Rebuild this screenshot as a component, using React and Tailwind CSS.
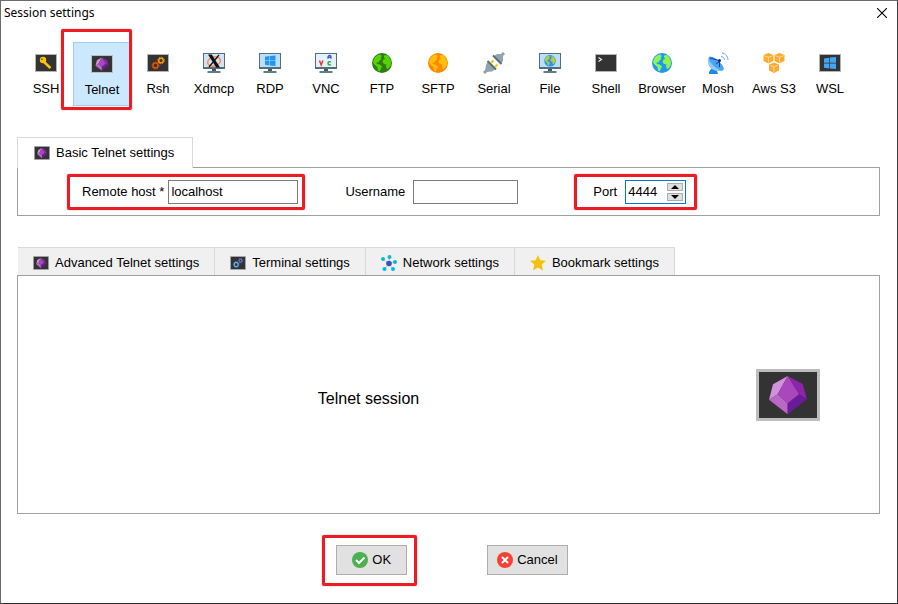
import React, { useState } from "react";

function Screen({ children, className = "h-[18px] w-[22px]" }) {
  return (
    <svg viewBox="0 0 22 18" preserveAspectRatio="none" className={className} aria-hidden="true">
      <rect x="0.5" y="0.5" width="21" height="17" fill="#333" stroke="#b4b4b4" />
      {children}
    </svg>
  );
}

function Monitor({ children, fill = "#bbdefb" }) {
  return (
    <svg viewBox="0 0 22 20" className="h-5 w-[22px]" aria-hidden="true">
      <rect x="0.5" y="0.5" width="21" height="15" fill={fill} stroke="#546e7a" />
      <path d="M0 14h22v2H0z" fill="#546e7a" />
      <path d="M9 16h4v2.500H9z" fill="#455a64" />
      <path d="M4.500 18h13v2h-13z" fill="#607d8b" />
      {children}
    </svg>
  );
}

function Gem({ className = "h-[18px] w-[22px]", border = 3 }) {
  return (
    <svg viewBox="0 0 64 52" preserveAspectRatio="none" className={className} aria-hidden="true">
      <rect width="64" height="52" fill="#bdbdbd" />
      <rect x={border} y={border} width={64 - border * 2} height={52 - border * 2} fill="#333" />
      <path d="M31.700 7L17 15.300 13 30.700 21.700 25.300z" fill="#ce93d8" />
      <path d="M31.700 7L46.700 15 51 30.300 43 25.300z" fill="#8e24aa" />
      <path d="M13 30.700L21.700 25.300 31.700 34.300V45.300z" fill="#ba68c8" />
      <path d="M51 30.300L43 25.300 31.700 34.300V45.300z" fill="#6a1b9a" />
      <path d="M31.700 7L21.700 25.300 31.700 34.300 43 25.300z" fill="#ab47bc" />
    </svg>
  );
}

function GlobeShape({ sea, land }) {
  return (
    <>
      <circle cx="10" cy="10" r="10" fill={sea} />
      <path
        d="M1.500 7C2.500 4 5 1.800 8 1.500L10 3 8.500 4.500 9.500 6 7.500 7.500 6.500 9.500 4.500 9.500 5 11 7.500 11.500 10 13.500 9 15.500 7.500 18.500 6 17.500 5.500 14 3 12 1.200 10z"
        fill={land}
      />
      <path
        d="M12 2.500L15 2C17.500 4 19 6.500 19 9.500L18.500 13 16.500 15.500 15 16 14 13.500 14.500 11.500 12 11 10.500 9 11.500 6.500 13.500 6 12 4.500z"
        fill={land}
      />
    </>
  );
}

function Globe({ sea, land }) {
  return (
    <svg viewBox="0 0 20 20" className="h-5 w-5" aria-hidden="true">
      <GlobeShape sea={sea} land={land} />
    </svg>
  );
}

function Gear({ x, y, r, color }) {
  return (
    <g fill="none" stroke={color}>
      <circle cx={x} cy={y} r={r} strokeWidth="1.500" />
      <circle cx={x} cy={y} r={r + 1} strokeWidth="1" strokeDasharray="1.300 1.300" />
    </g>
  );
}

function WindowsShape({ color }) {
  return (
    <g fill={color}>
      <path d="M0 1.300L4.700.6v4.700H0z" />
      <path d="M5.300.5L11 0v5.300H5.300z" />
      <path d="M0 5.900h4.700v4.600L0 9.800z" />
      <path d="M5.300 5.900H11V11l-5.700-.5z" />
    </g>
  );
}

function KeyIcon() {
  return (
    <Screen>
      <circle cx="8" cy="6" r="3.200" fill="#ffc107" />
      <circle cx="7" cy="5.200" r="0.800" fill="#333" />
      <path d="M9 8l6.500 6" stroke="#ffc107" strokeWidth="2.400" fill="none" />
      <path d="M11.500 12l1-1M13.500 13.800l1-1" stroke="#ffc107" strokeWidth="1.200" fill="none" />
    </Screen>
  );
}

function RshIcon() {
  return (
    <Screen>
      <Gear x={14} y={6.500} r={2.300} color="#ff9800" />
      <Gear x={8.500} y={11.500} r={2.500} color="#e65100" />
    </Screen>
  );
}

function XdmcpIcon() {
  return (
    <Monitor fill="#cfe4f7">
      <ellipse cx="11" cy="8.500" rx="6.500" ry="4.500" fill="none" stroke="#ff8a50" strokeWidth="1.500" transform="rotate(-15 11 8.500)" />
      <path d="M5 1.500h3.800L17 14.500h-3.800z" fill="#111" />
      <path d="M16 2L6 14" stroke="#111" strokeWidth="1.200" />
    </Monitor>
  );
}

function RdpIcon() {
  return (
    <Monitor>
      <g transform="translate(6 2.500) scale(.95)">
        <WindowsShape color="#2196f3" />
      </g>
    </Monitor>
  );
}

function VncIcon() {
  return (
    <Monitor fill="#e3f2fd">
      <path d="M4.500 7.500l1.700 4.500 1.700-4.500" fill="none" stroke="#e53935" strokeWidth="1.500" />
      <path d="M16 9.200c-1-.8-3-.6-3 1.100s2 2 3 1.200" fill="none" stroke="#2eaf3c" strokeWidth="1.500" />
      <path d="M13 5.700V4c0-2 3-2 3 0v1.700M13 4.300h3" fill="none" stroke="#3f51e0" strokeWidth="1.300" />
    </Monitor>
  );
}

function SerialIcon() {
  return (
    <svg viewBox="0 0 22 22" className="h-[22px] w-[22px]" aria-hidden="true">
      <path d="M1 21l4-4M17 5l4-4" stroke="#90a4ae" strokeWidth="3" />
      <path d="M4.500 10L12 17.500 9 19.500l-6 .5-1-1L3 13z" fill="#90a4ae" />
      <path d="M11 4l7.500 7.500 1.500-3V3l-1-1h-5z" fill="#90a4ae" />
      <path d="M4.500 9l8.500 8.500M10 3.500l8.500 8.500" stroke="#546e7a" strokeWidth="2" />
      <path d="M8 11l2.500-2.500M12 15l2.500-2.500" stroke="#ffc107" strokeWidth="2" />
    </svg>
  );
}

function FileIcon() {
  return (
    <Monitor>
      <g transform="translate(5.200 2) scale(.58)">
        <GlobeShape sea="#2196f3" land="#c0ca33" />
      </g>
    </Monitor>
  );
}

function ShellIcon() {
  return (
    <Screen>
      <path d="M3.500 3.500l3 2-3 2" fill="none" stroke="#eee" strokeWidth="1.200" />
    </Screen>
  );
}

function MoshIcon() {
  return (
    <svg viewBox="0 0 22 22" className="h-[22px] w-[22px]" aria-hidden="true">
      <path d="M4 17l5-1 2 6H2v-2z" fill="#1e88e5" />
      <path d="M2 5C0 9 1 14 4 16.500s9 3.500 12.500 1.500z" fill="#90caf9" />
      <ellipse cx="9.200" cy="11.500" rx="9.700" ry="3.500" fill="#42a5f5" transform="rotate(42 9.200 11.500)" />
      <path d="M9 12l4-3M12.500 9v6M3 6l9 2.500" stroke="#1a3f91" strokeWidth="1" />
      <circle cx="12.500" cy="8.500" r="1.500" fill="#1a237e" />
      <path d="M14 4.500c2 0 3.300 1.500 3.500 3.500M15 1c3.500.3 5.700 3 6 7" fill="none" stroke="#64a9ee" strokeWidth="1" />
    </svg>
  );
}

function Cube({ x, y }) {
  return (
    <g transform={`translate(${x} ${y})`}>
      <path d="M0 2l5-2 5 2v6l-5 2.500L0 8z" fill="#fbac30" />
      <path d="M1 2.700L5 4.300l4-1.600M5 4.300V9.500" fill="none" stroke="#ffe3b5" strokeWidth="0.800" />
    </g>
  );
}

function AwsIcon() {
  return (
    <svg viewBox="0 0 22 20" className="h-5 w-[22px]" aria-hidden="true">
      <Cube x={0.5} y={0} />
      <Cube x={11.5} y={0} />
      <Cube x={6} y={9.5} />
    </svg>
  );
}

function WslIcon() {
  return (
    <Screen>
      <g transform="translate(5 3) scale(1.090)">
        <WindowsShape color="#42a5f5" />
      </g>
    </Screen>
  );
}

function TerminalIcon() {
  return (
    <Screen className="h-[14px] w-4">
      <Gear x={14.500} y={6} r={1.900} color="#5c78d0" />
      <Gear x={8.500} y={11} r={2.700} color="#64b5f6" />
    </Screen>
  );
}

function NetworkIcon() {
  const nodes = [[2, 4], [8.500, 2], [14, 7], [12, 14], [3.500, 14]];
  return (
    <svg viewBox="0 0 16 16" className="h-4 w-4" aria-hidden="true">
      {nodes.map(([x, y]) => (
        <path key={x} d={`M8 8.500L${x} ${y}`} stroke="#b0bec5" strokeWidth="0.800" />
      ))}
      {nodes.map(([x, y]) => (
        <circle key={x} cx={x} cy={y} r="2" fill="#00bcd4" />
      ))}
      <circle cx="8" cy="8.500" r="2.800" fill="#3f51b5" />
    </svg>
  );
}

function StarIcon() {
  return (
    <svg viewBox="0 0 16 16" className="h-4 w-4" aria-hidden="true">
      <path d="M8 0l2.300 5.300 5.700.5-4.300 3.800L13 15.500 8 12.500l-5 3 1.300-5.900L0 5.800l5.700-.5z" fill="#f4c20d" />
    </svg>
  );
}

function RoundIcon({ color, d }) {
  return (
    <svg viewBox="0 0 16 16" className="h-4 w-4" aria-hidden="true">
      <circle cx="8" cy="8" r="8" fill={color} />
      <path d={d} fill="none" stroke="#fff" strokeWidth="2" />
    </svg>
  );
}

const sessions = [
  { name: "SSH", icon: <KeyIcon /> },
  { name: "Telnet", icon: <Gem />, marked: true },
  { name: "Rsh", icon: <RshIcon /> },
  { name: "Xdmcp", icon: <XdmcpIcon /> },
  { name: "RDP", icon: <RdpIcon /> },
  { name: "VNC", icon: <VncIcon /> },
  { name: "FTP", icon: <Globe sea="#2e7d14" land="#55d400" /> },
  { name: "SFTP", icon: <Globe sea="#ff8800" land="#ffc107" /> },
  { name: "Serial", icon: <SerialIcon /> },
  { name: "File", icon: <FileIcon /> },
  { name: "Shell", icon: <ShellIcon /> },
  { name: "Browser", icon: <Globe sea="#2196f3" land="#8cf552" /> },
  { name: "Mosh", icon: <MoshIcon /> },
  { name: "Aws S3", icon: <AwsIcon /> },
  { name: "WSL", icon: <WslIcon /> },
];

const tabs = [
  { name: "Advanced Telnet settings", icon: <Gem className="h-[14px] w-4" /> },
  { name: "Terminal settings", icon: <TerminalIcon /> },
  { name: "Network settings", icon: <NetworkIcon /> },
  { name: "Bookmark settings", icon: <StarIcon /> },
];

function Highlight({ className }) {
  return (
    <span
      className={`pointer-events-none absolute rounded-xs border-3 border-[#ed1c24] shadow-[0_0_1px_#ed1c24] ${className}`}
    />
  );
}

export default function App() {
  const [port, setPort] = useState(4444);
  return (
    <div className="flex min-h-screen flex-col border border-[#6b6b6b] border-r-[#3c3c40] border-b-[#2f2b30] bg-white font-['Liberation_Sans',Arial,sans-serif] text-[13px] leading-4 text-black">
      <header className="flex h-6 items-center justify-between pr-[9px] pl-[3px]">
        <h1 className="font-['Noto_Sans','Open_Sans',sans-serif] text-xs">Session settings</h1>
        <button type="button" aria-label="Close" className="p-px">
          <svg viewBox="0 0 10 10" className="h-[10px] w-[10px]" aria-hidden="true">
            <path d="M0 0l10 10M10 0L0 10" stroke="#000" strokeWidth="1.100" />
          </svg>
        </button>
      </header>

      <nav className="mt-[17px] flex pl-[17px]">
        {sessions.map((s) => (
          <button
            key={s.name}
            type="button"
            className={`relative flex h-16 shrink-0 flex-col items-center border whitespace-nowrap ${
              s.marked ? "-mx-px w-[58px] border-[#99d1ff] bg-[#cce8ff] pt-[10px]" : "w-14 border-transparent pt-[9px]"
            }`}
          >
            <span className="flex h-[22px] items-center">{s.icon}</span>
            <span className="mt-[7px]">{s.name}</span>
            {s.marked && <Highlight className="-top-[14px] -right-[2px] -bottom-[5px] -left-[13px]" />}
          </button>
        ))}
      </nav>

      <main className="flex flex-1 flex-col pt-[31px] pr-[17px] pl-4">
        <section>
          <div className="flex">
            <h2 className="relative z-10 -mb-px flex h-[31px] items-center gap-[6px] border border-b-0 border-[#d9d9d9] bg-white pr-[18px] pl-4">
              <Gem className="h-[14px] w-4" />
              Basic Telnet settings
            </h2>
          </div>
          <form className="flex h-[49px] items-center border border-[#a0a0a0] pl-[49px]">
            <div className="relative flex h-9 items-center gap-1 pr-[7px] pl-[15px]">
              <label htmlFor="host">Remote host *</label>
              <input id="host" defaultValue="localhost" className="h-6 w-[130px] border border-[#7a7a7a] px-[2px] outline-none" />
              <Highlight className="inset-0" />
            </div>
            <div className="ml-10 flex items-center gap-2">
              <label htmlFor="user">Username</label>
              <input id="user" className="h-6 w-[105px] border border-[#7a7a7a] px-[2px] outline-none" />
            </div>
            <div className="relative ml-14 flex h-9 items-center gap-2 pr-[11px] pl-[19px]">
              <label htmlFor="port">Port</label>
              <div className="flex h-6 items-center border border-[#0078d7] pr-[2px]">
                <input
                  id="port"
                  type="number"
                  value={port}
                  onChange={(e) => setPort(Number(e.target.value))}
                  className="w-[41px] [appearance:textfield] pl-[2px] outline-none [&::-webkit-inner-spin-button]:appearance-none"
                />
                <div className="flex flex-col gap-[2px]">
                  <button type="button" aria-label="Increase port" onClick={() => setPort(port + 1)} className="flex h-2 w-4 items-center justify-center border border-[#adadad] bg-[#e1e1e1]">
                    <svg viewBox="0 0 8 4" className="h-1 w-2" aria-hidden="true"><path d="M0 4l4-4 4 4z" /></svg>
                  </button>
                  <button type="button" aria-label="Decrease port" onClick={() => setPort(port - 1)} className="flex h-2 w-4 items-center justify-center border border-[#adadad] bg-[#e1e1e1]">
                    <svg viewBox="0 0 8 4" className="h-1 w-2" aria-hidden="true"><path d="M0 0l4 4 4-4z" /></svg>
                  </button>
                </div>
              </div>
              <Highlight className="inset-0" />
            </div>
          </form>
        </section>

        <section className="mt-[31px] flex flex-1 flex-col">
          <div className="flex pl-px">
            {tabs.map((t) => (
              <button key={t.name} type="button" className="flex h-7 items-center gap-[6px] border-t border-r border-[#d9d9d9] bg-[#f0f0f0] px-[15px] pt-[2px]">
                {t.icon}
                {t.name}
              </button>
            ))}
          </div>
          <div className="flex flex-1 items-center border border-[#a0a0a0]">
            <p className="flex-1 pt-2 text-center text-base">Telnet session</p>
            <div className="flex w-40 justify-center pr-[22px]">
              <Gem className="h-[52px] w-16" />
            </div>
          </div>
        </section>
      </main>

      <footer className="flex justify-center gap-20 pt-[31px] pb-7 pl-[6px]">
        <div className="relative">
          <button type="button" className="flex h-[30px] items-center gap-1 border border-[#adadad] bg-[#e1e1e1] px-[15px]">
            <RoundIcon color="#4caf50" d="M4 8l3 3 5.500-5.500" />
            OK
          </button>
          <Highlight className="-top-[10px] -right-[10px] -bottom-[11px] -left-[14px]" />
        </div>
        <button type="button" className="flex h-[30px] items-center gap-1 border border-[#adadad] bg-[#e1e1e1] px-[9px]">
          <RoundIcon color="#f44336" d="M5 5l6 6M11 5l-6 6" />
          Cancel
        </button>
      </footer>
    </div>
  );
}
